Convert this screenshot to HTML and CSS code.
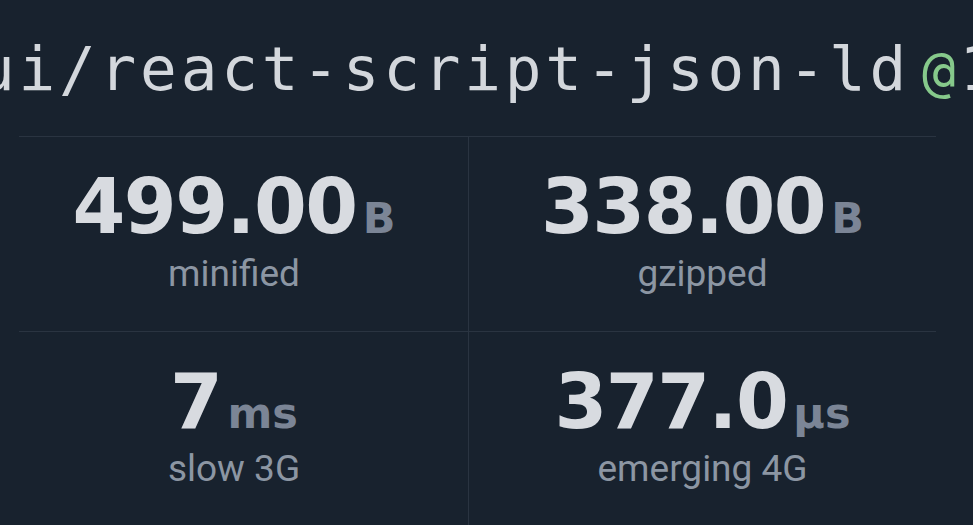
FILE: index.html
```html
<!DOCTYPE html>
<html lang="en">
<head>
    <meta charset="UTF-8">
    <meta name="viewport" content="width=device-width, initial-scale=1.0">
    <title>react-script-json-ld - bundle size</title>
    <link rel="stylesheet" href="styles.css">
</head>
<body>
    <div id="page">
        <h1 class="pkg-title">
            <span class="pkg-name">ui/react-script-json-ld</span>
            <span class="pkg-version"><span class="at">@</span>1.0.0</span>
        </h1>
        <div class="stats">
            <div class="stat first">
                <div class="stat-value">499.00<span class="unit">B</span></div>
                <div class="stat-label">minified</div>
            </div>
            <div class="stat">
                <div class="stat-value">338.00<span class="unit">B</span></div>
                <div class="stat-label">gzipped</div>
            </div>
            <div class="stat first">
                <div class="stat-value">7<span class="unit">ms</span></div>
                <div class="stat-label">slow 3G</div>
            </div>
            <div class="stat">
                <div class="stat-value">377.0<span class="unit">µs</span></div>
                <div class="stat-label">emerging 4G</div>
            </div>
        </div>
    </div>
</body>
</html>
```

FILE: styles.css
```css
* {box-sizing: border-box;}
html, body {margin: 0; height: 100%;}
body {
    background-color: #18222e;
    overflow: hidden;
}
#page {width: 973px; overflow: hidden;}

/* package name */
.pkg-title {
    display: flex;
    align-items: baseline;
    height: 136px;
    margin: 0 0 0 -22px;
    padding-top: 40px;
    font-family: "DejaVu Sans Mono", monospace;
    font-size: 61px;
    font-weight: normal;
    line-height: 58px;
    letter-spacing: 3.8px;
    color: #d3d7dc;
    white-space: nowrap;
}
.pkg-version {margin-left: 12px; color: #d3d7dc;}
.pkg-version .at {color: #86c98b; font-size: 56px;}

/* size stats */
.stats {
    display: grid;
    grid-template-columns: 449px 468px;
    margin-left: 19px;
    width: 917px;
}
.stat {
    display: flex;
    flex-direction: column;
    align-items: center;
    padding: 32px 0 39px;
    border-top: 1px solid #2a3441;
    border-left: 1px solid #2a3441;
}
.stat.first {border-left: none; padding-right: 19px;}

.stat-value {
    display: flex;
    align-items: baseline;
    gap: 6px;
    height: 76px;
    font-family: "DejaVu Sans", sans-serif;
    font-weight: bold;
    font-size: 76px;
    line-height: 76px;
    letter-spacing: -1.5px;
    color: #d8dbe0;
}
.unit {
    font-size: 43px;
    line-height: 43px;
    letter-spacing: 0;
    color: #7b8596;
}
.stat-label {
    margin-top: 10px;
    font-family: Roboto, sans-serif;
    font-weight: 400;
    font-size: 37px;
    line-height: 37px;
    color: #8c96a3;
}
```
